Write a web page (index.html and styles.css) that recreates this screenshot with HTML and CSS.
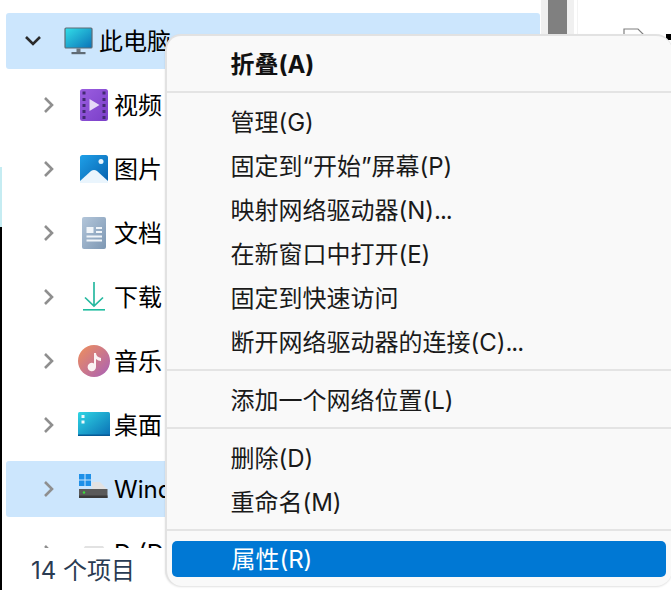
FILE: index.html
```html
<!DOCTYPE html>
<html lang="zh-CN">
<head>
<meta charset="utf-8">
<title>此电脑</title>
<link rel="stylesheet" href="styles.css">
</head>
<body>
<div class="window">
  <div class="edge"><div class="edge-top"></div><div class="edge-cyan"></div><div class="edge-black"></div></div>
  <div class="pane">
    <div class="main">
      <nav class="nav">
        <div class="row selected root">
          <svg class="chev" viewBox="0 0 20 20"><path d="M3 6l7 7 7-7" fill="none" stroke="#2b2b2b" stroke-width="2.600"/></svg>
          <svg class="ico" viewBox="0 0 32 32"><defs><linearGradient id="mon" x1="0" y1="0" x2="1" y2="1"><stop offset="0" stop-color="#33dfe8"/><stop offset="1" stop-color="#0a72b8"/></linearGradient></defs><rect x="2" y="3" width="27" height="20" rx="1" fill="url(#mon)" stroke="#5f6b75" stroke-width="1.200"/><rect x="13.500" y="23.500" width="4" height="3.500" fill="#6c757d"/><rect x="8.500" y="27" width="14" height="2.200" fill="#5f6b75"/></svg>
          <span class="label">此电脑</span>
        </div>
        <div class="row child">
          <svg class="chev" viewBox="0 0 20 20"><path d="M6 3l7 7-7 7" fill="none" stroke="#8f8f8f" stroke-width="2.600"/></svg>
          <svg class="ico" viewBox="0 0 32 32"><defs><linearGradient id="vid" x1="0" y1="0" x2="1" y2="1"><stop offset="0" stop-color="#9b5ee0"/><stop offset="1" stop-color="#7a3fc8"/></linearGradient></defs><rect width="28" height="32" x="2" rx="2.500" fill="url(#vid)"/><path d="M4.500 2.500h3v3h-3zM4.500 9h3v3h-3zM4.500 15h3v3h-3zM4.500 21h3v3h-3zM4.500 27h3v3h-3zM24.500 2.500h3v3h-3zM24.500 9h3v3h-3zM24.500 15h3v3h-3zM24.500 21h3v3h-3zM24.500 27h3v3h-3z" fill="#432a73"/><path d="M11.500 10l10 6-10 6z" fill="#e6daf7"/></svg>
          <span class="label">视频</span>
        </div>
        <div class="row child">
          <svg class="chev" viewBox="0 0 20 20"><path d="M6 3l7 7-7 7" fill="none" stroke="#8f8f8f" stroke-width="2.600"/></svg>
          <svg class="ico" viewBox="0 0 32 32"><defs><linearGradient id="pic" x1="0" y1="0" x2="1" y2="1"><stop offset="0" stop-color="#1fa0e8"/><stop offset="1" stop-color="#0660ad"/></linearGradient></defs><rect x="2" y="2" width="28" height="28" rx="2.500" fill="url(#pic)"/><circle cx="23" cy="8.500" r="2.500" fill="#e8f4fc"/><path d="M2 28l11-10q3-2 6 0l11 10v2H2z" fill="#eaf5fd"/></svg>
          <span class="label">图片</span>
        </div>
        <div class="row child">
          <svg class="chev" viewBox="0 0 20 20"><path d="M6 3l7 7-7 7" fill="none" stroke="#8f8f8f" stroke-width="2.600"/></svg>
          <svg class="ico" viewBox="0 0 32 32"><defs><linearGradient id="doc" x1="0" y1="0" x2="1" y2="1"><stop offset="0" stop-color="#b3c6da"/><stop offset="1" stop-color="#7d97b3"/></linearGradient></defs><rect x="4" y="0" width="24" height="32" rx="2" fill="url(#doc)"/><path d="M8.500 10h7v6h-7zM18 10h6v2h-6zM18 14h6v2h-6zM8.500 18.500h15.500v2H8.500zM8.500 22.500h15.500v2H8.500z" fill="#f1f5f9"/></svg>
          <span class="label">文档</span>
        </div>
        <div class="row child">
          <svg class="chev" viewBox="0 0 20 20"><path d="M6 3l7 7-7 7" fill="none" stroke="#8f8f8f" stroke-width="2.600"/></svg>
          <svg class="ico" viewBox="0 0 32 32"><path d="M16 1v24M7 16.500l9 8.500 9-8.500" fill="none" stroke="#27b9a0" stroke-width="1.700"/><rect x="5" y="28" width="22" height="1.600" fill="#1fbd9f"/></svg>
          <span class="label">下载</span>
        </div>
        <div class="row child">
          <svg class="chev" viewBox="0 0 20 20"><path d="M6 3l7 7-7 7" fill="none" stroke="#8f8f8f" stroke-width="2.600"/></svg>
          <svg class="ico" viewBox="0 0 32 32"><defs><linearGradient id="mus" x1="0" y1="0" x2="1" y2="1"><stop offset="0" stop-color="#f0905a"/><stop offset="1" stop-color="#a860b8"/></linearGradient></defs><circle cx="16" cy="16" r="16" fill="url(#mus)"/><path d="M16 8h2q0 4 5 5v3q-3 0-5-2v8a4.200 4.200 0 1 1-2-3.500z" fill="#fbf3f3"/></svg>
          <span class="label">音乐</span>
        </div>
        <div class="row child">
          <svg class="chev" viewBox="0 0 20 20"><path d="M6 3l7 7-7 7" fill="none" stroke="#8f8f8f" stroke-width="2.600"/></svg>
          <svg class="ico" viewBox="0 0 32 32"><defs><linearGradient id="desk" x1="0" y1="0" x2="1" y2="1"><stop offset="0" stop-color="#2fd6e4"/><stop offset="1" stop-color="#0a6fb5"/></linearGradient></defs><rect y="3" width="32" height="24" rx="1.500" fill="url(#desk)"/><path d="M3.500 6h3v3h-3zM3.500 11.500h3v3h-3z" fill="#eef9fc"/><rect y="25.500" width="32" height="1.500" fill="#075a96"/></svg>
          <span class="label">桌面</span>
        </div>
        <div class="row child selected">
          <svg class="chev" viewBox="0 0 20 20"><path d="M6 3l7 7-7 7" fill="none" stroke="#8f8f8f" stroke-width="2.600"/></svg>
          <svg class="ico" viewBox="0 0 32 32"><path d="M1 1h5.500v5.500H1zM7.500 1h5.500v5.500H7.500zM1 7.500h5.500v5.500H1zM7.500 7.500h5.500v5.500H7.500z" fill="#1e90e8"/><path d="M14 9h8l8 8H1.500l1-1H14z" fill="#e2e2e2"/><rect x="1" y="16" width="28.500" height="9" fill="#5a5a5a"/><rect x="1" y="22.500" width="28.500" height="2.500" fill="#3a3a3a"/><circle cx="6" cy="19.500" r="1.200" fill="#3adf3a"/></svg>
          <span class="label">Windows (C:)</span>
        </div>
        <div class="row child">
          <svg class="chev" viewBox="0 0 20 20"><path d="M6 3l7 7-7 7" fill="none" stroke="#8f8f8f" stroke-width="2.600"/></svg>
          <svg class="ico" viewBox="0 0 32 32"><path d="M7 9h18l5 8H2z" fill="#e2e2e2"/><rect x="1" y="16" width="28.500" height="9" fill="#5a5a5a"/></svg>
          <span class="label">D (D:)</span>
        </div>
      </nav>
      <div class="track"><div class="thumb"></div></div>
      <div class="content">
        <svg class="file" viewBox="0 0 24 28"><path d="M1 1h14l8 8v18H1z" fill="#fff" stroke="#808080" stroke-width="1.200"/></svg>
      </div>
    </div>
    <footer class="status">14 个项目</footer>
  </div>
</div>
<div class="corner"></div>
<div class="menu">
  <div class="group first"><div class="item strong">折叠(A)</div></div>
  <div class="group">
    <div class="item">管理(G)</div>
    <div class="item">固定到“开始”屏幕(P)</div>
    <div class="item">映射网络驱动器(N)<span class="dots">...</span></div>
    <div class="item">在新窗口中打开(E)</div>
    <div class="item">固定到快速访问</div>
    <div class="item">断开网络驱动器的连接(C)<span class="dots">...</span></div>
  </div>
  <div class="group"><div class="item">添加一个网络位置(L)</div></div>
  <div class="group">
    <div class="item">删除(D)</div>
    <div class="item">重命名(M)</div>
  </div>
  <div class="group last"><div class="item active">属性(R)</div></div>
</div>
</body>
</html>
```
FILE: styles.css
```css
html, body {
  margin: 0;
  padding: 0;
  background: #fff;
}
body {
  width: 671px;
  height: 590px;
  overflow: hidden;
  position: relative;
  font-family: Inter, "Noto Sans CJK SC", sans-serif;
  font-size: 24px;
  color: #1a1a1a;
}
.window {
  display: flex;
  height: 590px;
}
.edge {
  width: 2px;
  flex: none;
  display: flex;
  flex-direction: column;
}
.edge-top { height: 167px; }
.edge-cyan { height: 60px; background: #c5ecf2; }
.edge-black { flex: 1; background: #000; }
.pane {
  flex: 1;
  min-width: 0;
  display: flex;
  flex-direction: column;
}
.main {
  display: flex;
  height: 548px;
  overflow: hidden;
}
.nav {
  width: 538px;
  flex: none;
  box-sizing: border-box;
  padding: 13px 0 0 4px;
  display: flex;
  flex-direction: column;
  gap: 8px;
}
.row {
  height: 56px;
  flex: none;
  display: flex;
  align-items: center;
  border-radius: 3px;
  white-space: nowrap;
  overflow: hidden;
  color: #000;
}
.row.selected { background: #cce6fd; }
.chev {
  width: 20px;
  height: 20px;
  flex: none;
  margin-left: 17px;
}
.child .chev { margin-left: 33px; }
.ico {
  width: 32px;
  height: 32px;
  flex: none;
  margin-left: 20px;
}
.child .ico { margin-left: 19px; }
.label {
  margin-left: 4px;
  padding-top: 2px;
  line-height: 32px;
}
.track {
  width: 33px;
  margin-left: 1px;
  flex: none;
  background: #f0f0f0;
}
.thumb {
  width: 19px;
  height: 35px;
  margin-left: 7px;
  background: #808080;
}
.content {
  flex: 1;
  margin-left: 3px;
  border-left: 1px solid #f3f3f3;
  padding: 28px 0 0 45px;
}
.file {
  width: 24px;
  height: 28px;
  display: block;
}
.status {
  height: 42px;
  box-sizing: border-box;
  padding: 5px 0 0 29px;
  line-height: 36px;
  color: #2a3b52;
  background: #fff;
}
.corner {
  position: absolute;
  right: 0;
  top: 34px;
  width: 5px;
  height: 6px;
  background: #000;
}
.menu {
  position: absolute;
  left: 165px;
  top: 34px;
  width: 507px;
  height: 552px;
  box-sizing: border-box;
  background: #f9f9f9;
  border: 1px solid #e2e2e2;
  border-width: 2px 0 0 2px;
  border-radius: 16px;
  box-shadow: 0 1px 2px rgba(0,0,0,.12);
  display: flex;
  flex-direction: column;
}
.group {
  display: flex;
  flex-direction: column;
  gap: 8px;
  padding: 11px 0 9px;
  border-bottom: 2px solid #e4e4e4;
}
.group.first { padding-top: 10px; }
.group.last { border-bottom: 0; padding: 10px 6px 0 5px; }
.item {
  height: 36px;
  line-height: 38px;
  padding-left: 63.4px;
  color: #1a1a1a;
  white-space: nowrap;
}
.dots { letter-spacing: -1px; }
.item.strong { font-weight: 700; color: #111; }
.item.active {
  background: #0078d4;
  color: #fff;
  border-radius: 5px;
  padding-left: 59.4px;
}
```
